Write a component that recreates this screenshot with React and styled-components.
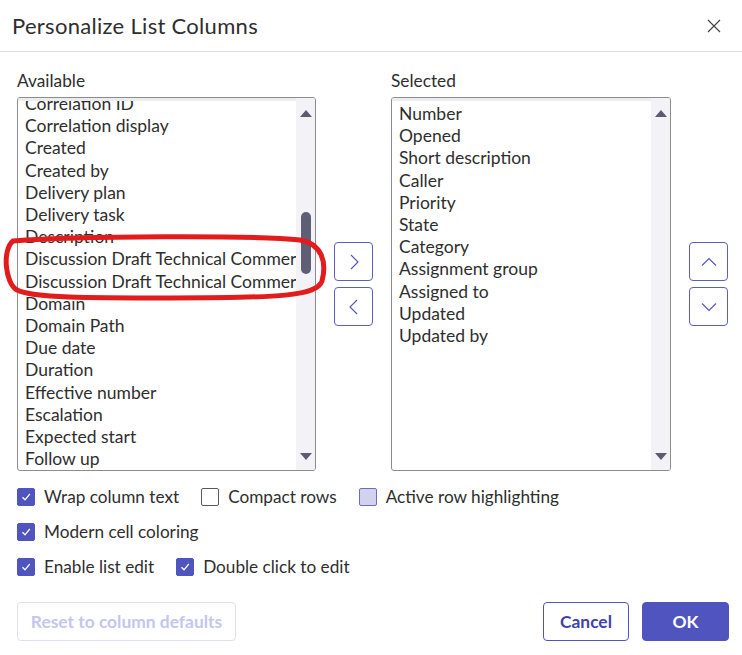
import React from 'react'
import styled, { createGlobalStyle } from 'styled-components'

const GlobalStyle = createGlobalStyle`
    html, body {
        margin: 0;
        padding: 0;
        background: #ffffff;
    }
    body {
        font-family: Lato, 'Noto Sans', sans-serif;
        color: #2e2e2e;
    }
`;

const Dialog = styled.div`
    position: relative;
    width: 742px;
    height: 655px;
    background: #ffffff;
    box-sizing: border-box;
`;

const Header = styled.div`
    height: 51px;
    display: flex;
    align-items: center;
    justify-content: space-between;
    padding: 0 20px 0 12px;
    border-bottom: 1px solid #dcdcdc;
`;

const Title = styled.h1`
    margin: 0;
    font-size: 22px;
    font-weight: 400;
    color: #2e2e2e;
    letter-spacing: 0.3px;
`;

const CloseButton = styled.button`
    border: none;
    background: none;
    padding: 0;
    width: 16px;
    height: 16px;
    display: flex;
    align-items: center;
    justify-content: center;
    cursor: pointer;
`;

const Body = styled.div`
    padding: 18px 13px 0 17px;
`;

const Columns = styled.div`
    display: grid;
    grid-template-columns: 299px 39px 280px 39px;
    grid-template-rows: 20px 374px;
    column-gap: 18px;
    row-gap: 7px;
`;

const Label = styled.div`
    font-size: 17.3px;
    line-height: 22px;
    color: #2e2e2e;
    grid-column: ${p => p.$col};
`;

const ListBox = styled.div`
    grid-column: ${p => p.$col};
    display: flex;
    border: 1px solid #8c8c8c;
    border-radius: 3px;
    overflow: hidden;
    background: #ffffff;
`;

const Items = styled.div`
    flex: 1;
    overflow: hidden;
    border-top: 3px solid #ececef;
    padding: 0 0 0 7px;
`;

const ItemList = styled.ul`
    list-style: none;
    margin: ${p => p.$offset}px 0 0 0;
    padding: 0;
`;

const Item = styled.li`
    font-size: 17.5px;
    line-height: 22.2px;
    white-space: nowrap;
    color: #2e2e2e;
`;

const ScrollTrack = styled.div`
    width: 19px;
    flex-shrink: 0;
    background: #f3f3f7;
    display: flex;
    flex-direction: column;
    align-items: center;
    padding: 12px 0 10px;
    box-sizing: border-box;
`;

const ScrollArrow = styled.div`
    width: 0;
    height: 0;
    border-left: 6px solid transparent;
    border-right: 6px solid transparent;
    ${p => p.$down
        ? 'border-top: 7px solid #5c5c70;'
        : 'border-bottom: 7px solid #5c5c70;'}
`;

const ScrollSpace = styled.div`
    flex: 1;
    width: 100%;
    display: flex;
    justify-content: center;
`;

const Thumb = styled.div`
    width: 10px;
    height: 62px;
    margin-top: ${p => p.$top}px;
    border-radius: 5px;
    background: #5e5e74;
`;

const MoveButtons = styled.div`
    grid-column: ${p => p.$col};
    display: flex;
    flex-direction: column;
    justify-content: center;
    gap: 6px;
`;

const IconButton = styled.button`
    width: 39px;
    height: 39px;
    padding: 0;
    box-sizing: border-box;
    border: 1px solid #5b5fc4;
    border-radius: 4px;
    background: #ffffff;
    display: flex;
    align-items: center;
    justify-content: center;
    cursor: pointer;
`;

const Options = styled.div`
    margin-top: 15px;
    display: flex;
    flex-direction: column;
    gap: 13px;
`;

const OptionRow = styled.div`
    display: flex;
    align-items: center;
    gap: 22px;
`;

const Option = styled.label`
    display: flex;
    align-items: center;
    gap: 9px;
    font-size: 17.2px;
    line-height: 22px;
    color: #2e2e2e;
    cursor: pointer;
`;

const Box = styled.span`
    width: 18px;
    height: 18px;
    box-sizing: border-box;
    border-radius: 2px;
    display: flex;
    align-items: center;
    justify-content: center;
    ${p => p.$state === 'checked' && 'background: #5054be; border: 1px solid #5054be;'}
    ${p => p.$state === 'empty' && 'background: #ffffff; border: 1px solid #5a5a5a;'}
    ${p => p.$state === 'tinted' && 'background: #d2d2ef; border: 1px solid #6a6dc8;'}
`;

const Footer = styled.div`
    margin-top: 24px;
    display: flex;
    align-items: center;
    justify-content: space-between;
`;

const Actions = styled.div`
    display: flex;
    gap: 13px;
`;

const Button = styled.button`
    height: 39px;
    width: ${p => p.$width}px;
    padding: 0;
    box-sizing: border-box;
    border-radius: 4px;
    font-family: Lato, 'Noto Sans', sans-serif;
    font-size: 17.4px;
    font-weight: 700;
    cursor: pointer;
    ${p => p.$variant === 'primary' && `
        background: #5054be;
        border: 1px solid #5054be;
        color: #ffffff;
    `}
    ${p => p.$variant === 'secondary' && `
        background: #ffffff;
        border: 1px solid #5054be;
        color: #3f43a8;
    `}
    ${p => p.$variant === 'disabled' && `
        background: #ffffff;
        border: 1px solid #dedef5;
        color: #c5c6ee;
        cursor: default;
    `}
`;

const Annotation = styled.svg`
    position: absolute;
    left: 0;
    top: 0;
    pointer-events: none;
`;

const available = [
    'Correlation ID', 'Correlation display', 'Created', 'Created by', 'Delivery plan',
    'Delivery task', 'Description', 'Discussion Draft Technical Commercial',
    'Discussion Draft Technical Commercial', 'Domain', 'Domain Path', 'Due date',
    'Duration', 'Effective number', 'Escalation', 'Expected start', 'Follow up', 'Group list',
];

const selected = [
    'Number', 'Opened', 'Short description', 'Caller', 'Priority', 'State', 'Category',
    'Assignment group', 'Assigned to', 'Updated', 'Updated by',
];

const Chevron = ({ dir }) => {
    const paths = {
        right: 'M5 1 L12 8 L5 15',
        left: 'M11 1 L4 8 L11 15',
        up: 'M1 11.5 L8 4.5 L15 11.5',
        down: 'M1 4.5 L8 11.5 L15 4.5',
    };
    return (
        <svg width="16" height="16" viewBox="0 0 16 16">
            <path d={paths[dir]} fill="none" stroke="#5054be" strokeWidth="1.1" />
        </svg>
    );
};

const Check = () => (
    <svg width="12" height="12" viewBox="0 0 12 12">
        <path d="M2.5 6.3 L5 8.8 L9.8 3" fill="none" stroke="#ffffff" strokeWidth="1.3" />
    </svg>
);

const Checkbox = ({ state, children }) => (
    <Option>
        <Box $state={state}>{state === 'checked' && <Check />}</Box>
        {children}
    </Option>
);

const ScrollBar = ({ thumbTop }) => (
    <ScrollTrack>
        <ScrollArrow />
        <ScrollSpace>{thumbTop != null && <Thumb $top={thumbTop} />}</ScrollSpace>
        <ScrollArrow $down />
    </ScrollTrack>
);

const App = () => {
  return (
    <Dialog>
        <GlobalStyle />
        <Header>
            <Title>Personalize List Columns</Title>
            <CloseButton aria-label="Close">
                <svg width="14" height="14" viewBox="0 0 14 14">
                    <path d="M1 1 L13 13 M13 1 L1 13" stroke="#444" strokeWidth="1.2" />
                </svg>
            </CloseButton>
        </Header>
        <Body>
            <Columns>
                <Label $col={1}>Available</Label>
                <Label $col={3}>Selected</Label>
                <ListBox $col={1}>
                    <Items>
                        <ItemList $offset={-8}>
                            {available.map((name, i) => <Item key={i}>{name}</Item>)}
                        </ItemList>
                    </Items>
                    <ScrollBar thumbTop={95} />
                </ListBox>
                <MoveButtons $col={2}>
                    <IconButton aria-label="Add"><Chevron dir="right" /></IconButton>
                    <IconButton aria-label="Remove"><Chevron dir="left" /></IconButton>
                </MoveButtons>
                <ListBox $col={3}>
                    <Items>
                        <ItemList $offset={2}>
                            {selected.map(name => <Item key={name}>{name}</Item>)}
                        </ItemList>
                    </Items>
                    <ScrollBar />
                </ListBox>
                <MoveButtons $col={4}>
                    <IconButton aria-label="Move up"><Chevron dir="up" /></IconButton>
                    <IconButton aria-label="Move down"><Chevron dir="down" /></IconButton>
                </MoveButtons>
            </Columns>
            <Options>
                <OptionRow>
                    <Checkbox state="checked">Wrap column text</Checkbox>
                    <Checkbox state="empty">Compact rows</Checkbox>
                    <Checkbox state="tinted">Active row highlighting</Checkbox>
                </OptionRow>
                <OptionRow>
                    <Checkbox state="checked">Modern cell coloring</Checkbox>
                </OptionRow>
                <OptionRow>
                    <Checkbox state="checked">Enable list edit</Checkbox>
                    <Checkbox state="checked">Double click to edit</Checkbox>
                </OptionRow>
            </Options>
            <Footer>
                <Button $variant="disabled" $width={219}>Reset to column defaults</Button>
                <Actions>
                    <Button $variant="secondary" $width={86}>Cancel</Button>
                    <Button $variant="primary" $width={87}>OK</Button>
                </Actions>
            </Footer>
        </Body>
        <Annotation width="742" height="655" viewBox="0 0 742 655">
            <path
                d="M13 241 C80 236, 250 235, 300 240 C322 244, 327 262, 322 281 C317 296, 280 298, 170 298 C90 298, 32 298, 17 290 C5 283, 2 250, 13 241 Z"
                fill="none"
                stroke="#e21c1c"
                strokeWidth="5"
                strokeLinecap="round"
            />
        </Annotation>
    </Dialog>
  )
}

export default App
